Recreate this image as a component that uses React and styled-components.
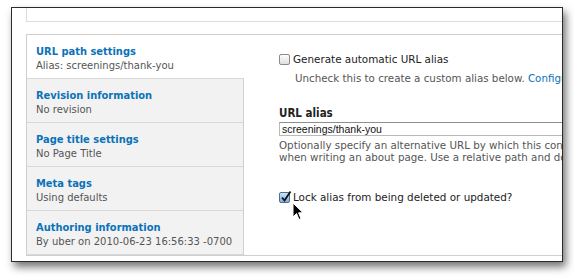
import React from 'react';
import styled, { createGlobalStyle } from 'styled-components';

const Global = createGlobalStyle`
  html, body {
    margin: 0;
    padding: 0;
    background: #fff;
  }
  body {
    font-family: "DejaVu Sans", "Noto Sans", sans-serif;
  }
`;

const Stage = styled.div`
  width: 574px;
  height: 277px;
  padding: 7px 0 0 11px;
  box-sizing: border-box;
  overflow: hidden;
`;

const Window = styled.div`
  width: 552px;
  height: 255px;
  box-sizing: border-box;
  border: 1px solid #2b2b2b;
  background: #fff;
  box-shadow: 3px 5px 8px rgba(0, 0, 0, 0.55);
  overflow: hidden;
`;

const Sheet = styled.div`
  width: 760px;
  padding-left: 14px;
`;

const PrevBox = styled.div`
  height: 13px;
  border: 1px solid #dcdcdc;
  border-top: none;
`;

const Tabs = styled.div`
  margin-top: 12px;
  display: flex;
  border: 1px solid #cfcfcf;
  border-right: none;
`;

const List = styled.ul`
  list-style: none;
  margin: 0;
  padding: 0;
  width: 216px;
  flex: none;
  background: #f2f2f2;
  border-right: 1px solid #cfcfcf;
`;

const Item = styled.li`
  height: 44px;
  box-sizing: border-box;
  padding: 10px 0 0 9px;
  border-bottom: 1px solid #d8d8d8;
  background: ${p => (p.active ? '#fff' : 'transparent')};
  margin-right: ${p => (p.active ? '-1px' : '0')};
  position: relative;
`;

const Title = styled.div`
  font-family: "DejaVu Sans Condensed", "DejaVu Sans", sans-serif;
  font-size: 11px;
  font-weight: bold;
  color: #0a72b9;
  line-height: 14px;
`;

const Summary = styled.div`
  font-size: 10px;
  color: #555;
  line-height: 14px;
`;

const Pane = styled.div`
  flex: 1;
  padding: 17px 0 0 35px;
  font-size: 10.4px;
  color: #222;
`;

const CheckRow = styled.label`
  display: flex;
  align-items: center;
  gap: 3px;
  height: 14px;
  white-space: nowrap;
`;

const Box = styled.span`
  width: 11px;
  height: 11px;
  box-sizing: border-box;
  border: 1px solid ${p => (p.checked ? '#4c6f92' : '#8a8a8a')};
  border-radius: 2px;
  background: ${p => (p.checked
    ? 'linear-gradient(#cfe3f7, #7fb0e0)'
    : 'linear-gradient(#fdfdfd, #dedede)')};
  position: relative;
  flex: none;
`;

const Tick = styled.svg`
  position: absolute;
  left: 0;
  top: -3px;
`;

const Description = styled.div`
  color: #555;
  font-size: 10.3px;
  line-height: 12px;
  white-space: nowrap;
  margin: ${p => p.margin || '0'};
`;

const Link = styled.span`
  color: #0a72b9;
`;

const FieldLabel = styled.div`
  margin-top: 22px;
  font-family: "DejaVu Sans Condensed", "DejaVu Sans", sans-serif;
  font-weight: bold;
  font-size: 11.5px;
  color: #222;
  line-height: 14px;
`;

const Input = styled.div`
  margin-top: 2px;
  height: 14px;
  box-sizing: border-box;
  border: 1px solid #b9b9b9;
  border-top-color: #8e8e8e;
  font-family: "Liberation Sans", Arial, sans-serif;
  font-size: 10.5px;
  line-height: 12px;
  padding-left: 2px;
  color: #111;
  width: 420px;
`;

const LockRow = styled.div`
  margin-top: 27px;
  position: relative;
`;

const Cursor = styled.svg`
  position: absolute;
  left: 13px;
  top: 12px;
`;

const tabs = [
  { title: 'URL path settings', summary: 'Alias: screenings/thank-you', active: true },
  { title: 'Revision information', summary: 'No revision' },
  { title: 'Page title settings', summary: 'No Page Title' },
  { title: 'Meta tags', summary: 'Using defaults' },
  { title: 'Authoring information', summary: 'By uber on 2010-06-23 16:56:33 -0700' },
];

const Checkbox = ({ checked }) => (
  <Box checked={checked}>
    {checked && (
      <Tick width="12" height="13" viewBox="0 0 12 13">
        <path d="M2 7.5 L4.5 10.5 L10.5 1.5" fill="none" stroke="#111" strokeWidth="1.8" />
      </Tick>
    )}
  </Box>
);

const App = () => (
  <Stage>
    <Global />
    <Window>
      <Sheet>
        <PrevBox />
        <Tabs>
          <List>
            {tabs.map(t => (
              <Item key={t.title} active={t.active}>
                <Title>{t.title}</Title>
                <Summary>{t.summary}</Summary>
              </Item>
            ))}
          </List>
          <Pane>
            <CheckRow>
              <Checkbox />
              Generate automatic URL alias
            </CheckRow>
            <Description margin="6px 0 0 16px">
              Uncheck this to create a custom alias below. <Link>Configure</Link>
            </Description>
            <FieldLabel>URL alias</FieldLabel>
            <Input>screenings/thank-you</Input>
            <Description margin="3px 0 0 0">
              Optionally specify an alternative URL by which this content
              <br />
              when writing an about page. Use a relative path and don't
            </Description>
            <LockRow>
              <CheckRow>
                <Checkbox checked />
                Lock alias from being deleted or updated?
              </CheckRow>
              <Cursor width="12" height="19" viewBox="0 0 12 19">
                <path d="M1 1 L1 15 L4.5 11.5 L7 17.5 L9 16.6 L6.6 10.8 L11 10.8 Z" fill="#000" stroke="#fff" strokeWidth="1" />
              </Cursor>
            </LockRow>
          </Pane>
        </Tabs>
      </Sheet>
    </Window>
  </Stage>
);

export default App;
